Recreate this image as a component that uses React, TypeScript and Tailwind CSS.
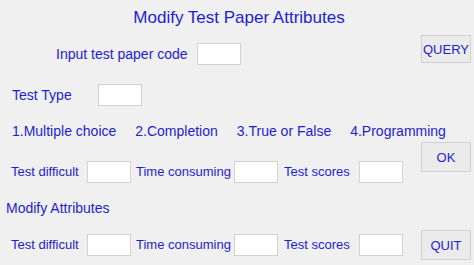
import React from 'react'

const LABEL = 'text-[#1e1ecf] whitespace-nowrap leading-[22px]'

function Field({ className = '' }: { className?: string }) {
  return <div className={`h-[22px] w-[44px] bg-white border border-[#d2d2d2] ${className}`} />
}

function Btn({ label, className = '' }: { label: string; className?: string }) {
  return (
    <button
      className={`w-[50px] bg-[#ebebeb] border border-[#d0d0d0] text-[13px] text-[#1e1ecf] leading-none flex items-center justify-center ${className}`}
    >
      {label}
    </button>
  )
}

function AttrRow({ className = '' }: { className?: string }) {
  return (
    <div className={`flex items-center h-[22px] text-[13px] ${className}`}>
      <span className={`${LABEL} w-[76px] ml-[11px]`}>Test difficult</span>
      <Field />
      <span className={`${LABEL} w-[98px] ml-[5px]`}>Time consuming</span>
      <Field />
      <span className={`${LABEL} w-[75px] ml-[6px]`}>Test scores</span>
      <Field />
    </div>
  )
}

export default function App() {
  return (
    <div className="w-[474px] h-[265px] bg-[#f0f0f0] overflow-hidden flex flex-col font-['Liberation_Sans',Arial,sans-serif]">
      {/* Title */}
      <div className="pt-[8px] h-[35px] pl-[4px] text-center text-[17px] leading-[20px] text-[#1e1ecf]">
        Modify Test Paper Attributes
      </div>

      {/* Paper code */}
      <div className="flex items-start h-[30px]">
        <div className="flex items-center mt-[8px] h-[22px] text-[14px]">
          <span className={`${LABEL} ml-[56px] w-[141px]`}>Input test paper code</span>
          <Field />
        </div>
        <Btn label="QUERY" className="ml-auto mr-[3px] h-[28px]" />
      </div>

      {/* Test type */}
      <div className="flex items-center mt-[19px] h-[22px] text-[14px]">
        <span className={`${LABEL} ml-[12px] w-[86px]`}>Test Type</span>
        <Field />
      </div>

      {/* Options */}
      <div className={`flex mt-[14px] h-[22px] ml-[12px] gap-[19px] text-[14px] ${LABEL}`}>
        <span>1.Multiple choice</span>
        <span>2.Completion</span>
        <span>3.True or False</span>
        <span>4.Programming</span>
      </div>

      {/* Current attributes */}
      <div className="flex items-start h-[41px]">
        <AttrRow className="mt-[19px]" />
        <Btn label="OK" className="ml-auto mr-[3px] h-[30px]" />
      </div>

      <div className={`mt-[14px] h-[22px] ml-[6px] text-[14px] ${LABEL}`}>Modify Attributes</div>

      {/* New attributes */}
      <div className="flex items-start h-[41px]">
        <AttrRow className="mt-[15px]" />
        <Btn label="QUIT" className="ml-auto mr-[3px] mt-[11px] h-[30px]" />
      </div>
    </div>
  )
}
